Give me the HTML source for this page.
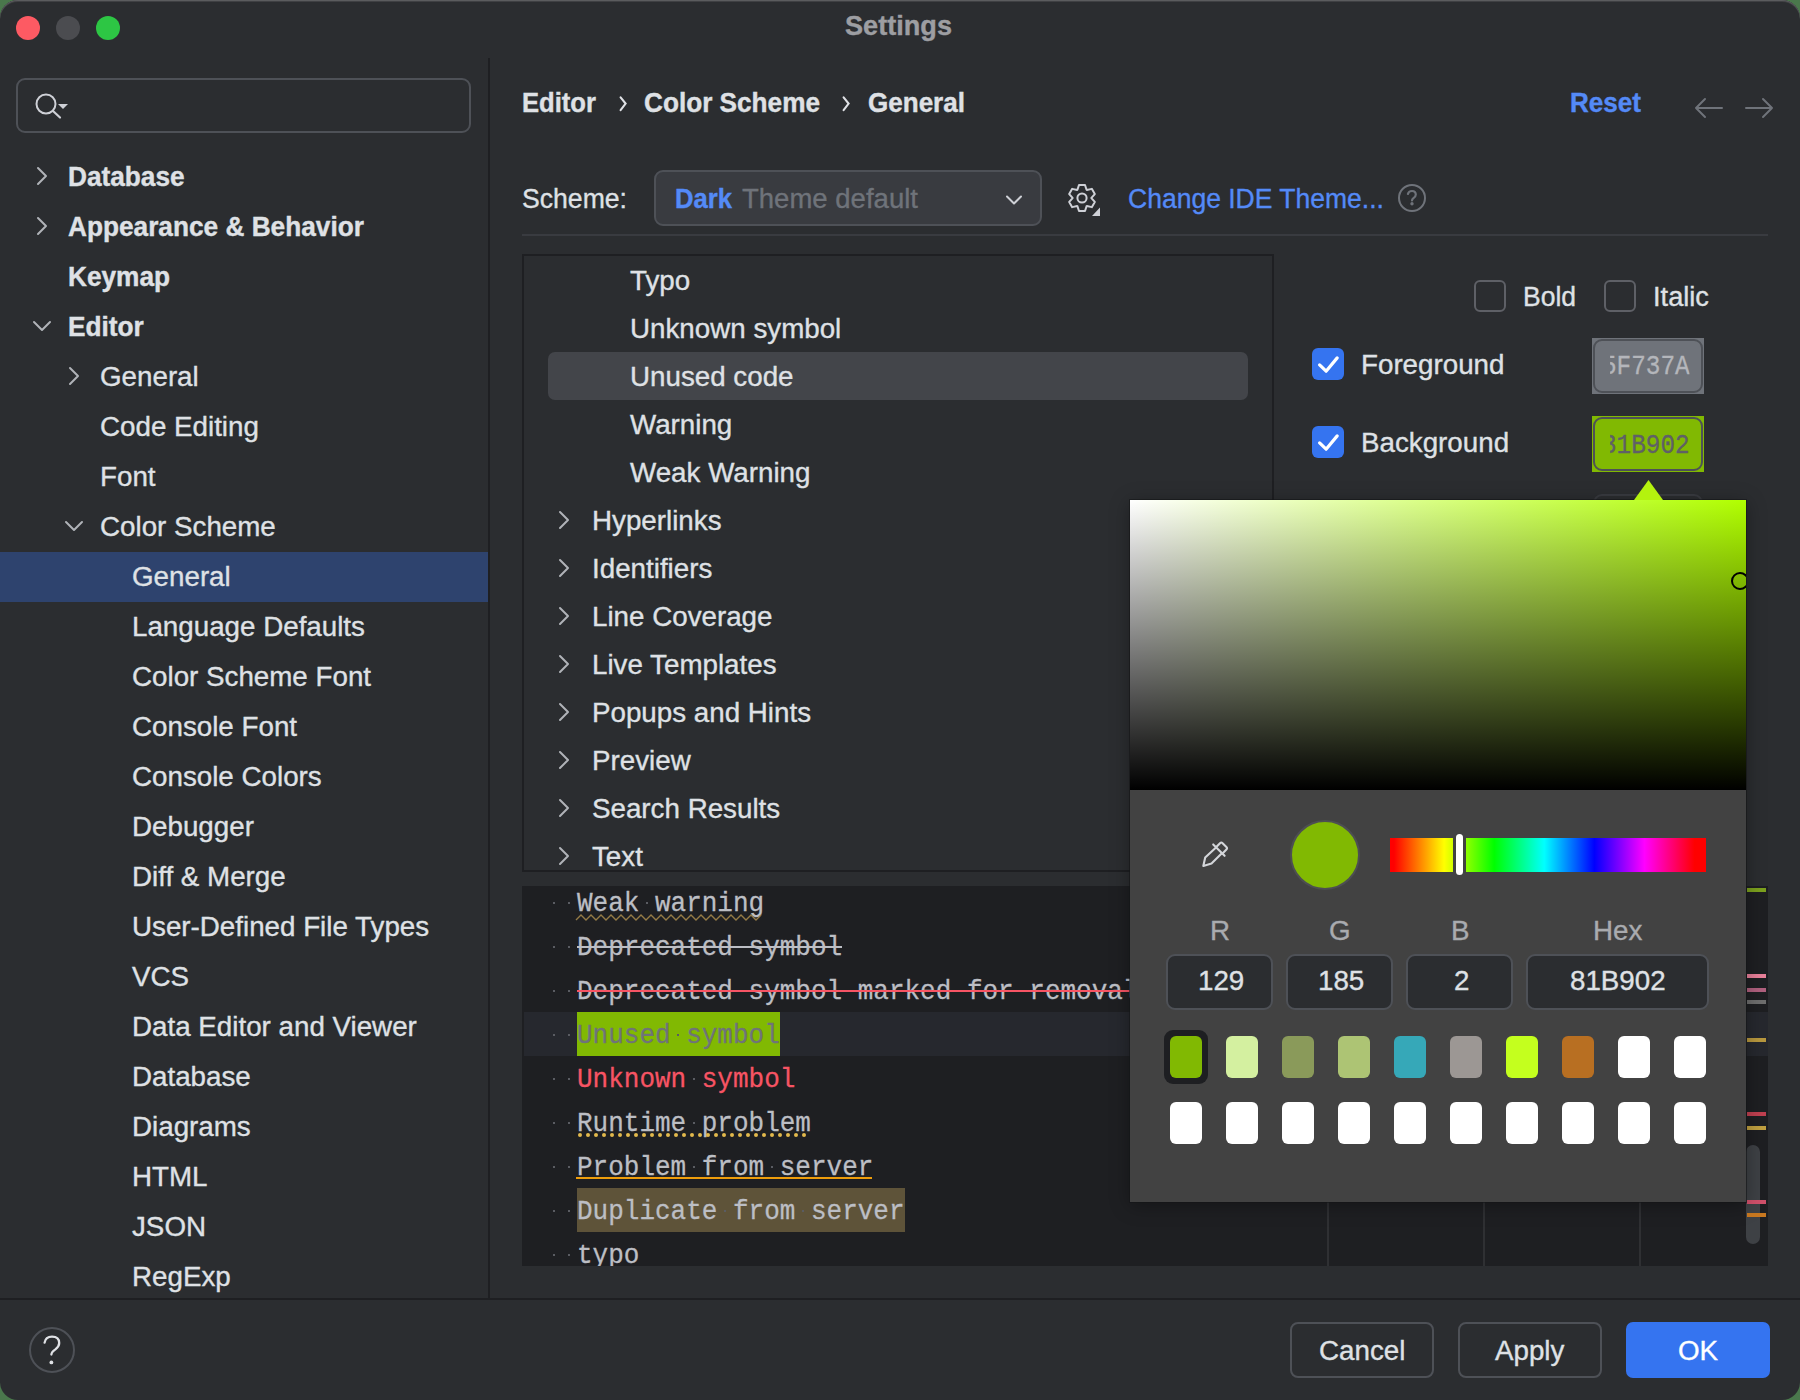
<!DOCTYPE html>
<html><head><meta charset="utf-8"><style>
html,body{margin:0;padding:0;width:1800px;height:1400px;overflow:hidden;background:#4a784c;}
.win{position:absolute;left:0;top:0;width:1800px;height:1400px;background:#2b2d30;border-radius:18px;box-shadow:inset 0 1px 0 #5b5c5e, inset 0 2px 0 #3f4043;}
.a{position:absolute;}
.t{position:absolute;white-space:pre;font-family:"Liberation Sans",sans-serif;transform-origin:0 0;}
.m{font-family:"Liberation Mono",monospace;-webkit-text-stroke:0.3px currentColor;}
svg.a{overflow:visible}
</style></head><body>
<div class="win"></div>
<div style="position:absolute;left:0;top:0;width:1800px;height:1400px;border-radius:18px;overflow:hidden">
<div class="t" style="left:845px;top:12.37px;font-size:27.91px;line-height:27.91px;font-weight:700;-webkit-text-stroke:0.4px currentColor;color:#9d9ea2;transform:scaleX(0.9719);">Settings</div>
<div class="a" style="left:16px;top:16px;width:24px;height:24px;border-radius:50%;background:#fd5a63"></div>
<div class="a" style="left:56px;top:16px;width:24px;height:24px;border-radius:50%;background:#4b4c50"></div>
<div class="a" style="left:96px;top:16px;width:24px;height:24px;border-radius:50%;background:#2dc644"></div>
<div class="a" style="left:16px;top:78px;width:455px;height:55px;border:2px solid #4e5157;border-radius:9px;box-sizing:border-box;"></div>
<svg class="a" style="left:30px;top:88px;" width="44" height="36" viewBox="0 0 44 36"><circle cx="16" cy="16" r="9.5" fill="none" stroke="#ced0d6" stroke-width="2"/><path d="M23 23 L30 29.5" stroke="#ced0d6" stroke-width="2.2" stroke-linecap="round"/><path d="M28 16 L38 16 L33 21 Z" fill="#ced0d6"/></svg>
<div class="a" style="left:0px;top:552px;width:488px;height:50px;background:#2e436e;"></div>
<div class="t" style="left:68px;top:162.62px;font-size:27.62px;line-height:27.62px;font-weight:700;-webkit-text-stroke:0.4px currentColor;color:#dfe1e5;transform:scaleX(0.9500);">Database</div>
<svg class="a" style="left:31.5px;top:164px;" width="20" height="24" viewBox="0 0 20 24"><path d="M6.0 4 L14.0 12 L6.0 20" fill="none" stroke="#b0b3b8" stroke-width="2" stroke-linecap="round" stroke-linejoin="round"/></svg>
<div class="t" style="left:68px;top:212.62px;font-size:27.62px;line-height:27.62px;font-weight:700;-webkit-text-stroke:0.4px currentColor;color:#dfe1e5;transform:scaleX(0.9500);">Appearance &amp; Behavior</div>
<svg class="a" style="left:31.5px;top:214px;" width="20" height="24" viewBox="0 0 20 24"><path d="M6.0 4 L14.0 12 L6.0 20" fill="none" stroke="#b0b3b8" stroke-width="2" stroke-linecap="round" stroke-linejoin="round"/></svg>
<div class="t" style="left:68px;top:262.62px;font-size:27.62px;line-height:27.62px;font-weight:700;-webkit-text-stroke:0.4px currentColor;color:#dfe1e5;transform:scaleX(0.9500);">Keymap</div>
<div class="t" style="left:68px;top:312.62px;font-size:27.62px;line-height:27.62px;font-weight:700;-webkit-text-stroke:0.4px currentColor;color:#dfe1e5;transform:scaleX(0.9500);">Editor</div>
<svg class="a" style="left:30px;top:316px;" width="24" height="20" viewBox="0 0 24 20"><path d="M4 6.0 L12 14.0 L20 6.0" fill="none" stroke="#b0b3b8" stroke-width="2" stroke-linecap="round" stroke-linejoin="round"/></svg>
<div class="t" style="left:100px;top:362.62px;font-size:27.62px;line-height:27.62px;-webkit-text-stroke:0.35px currentColor;color:#dfe1e5;transform:scaleX(1.0050);">General</div>
<svg class="a" style="left:63.5px;top:364px;" width="20" height="24" viewBox="0 0 20 24"><path d="M6.0 4 L14.0 12 L6.0 20" fill="none" stroke="#b0b3b8" stroke-width="2" stroke-linecap="round" stroke-linejoin="round"/></svg>
<div class="t" style="left:100px;top:412.62px;font-size:27.62px;line-height:27.62px;-webkit-text-stroke:0.35px currentColor;color:#dfe1e5;transform:scaleX(1.0050);">Code Editing</div>
<div class="t" style="left:100px;top:462.62px;font-size:27.62px;line-height:27.62px;-webkit-text-stroke:0.35px currentColor;color:#dfe1e5;transform:scaleX(1.0050);">Font</div>
<div class="t" style="left:100px;top:512.62px;font-size:27.62px;line-height:27.62px;-webkit-text-stroke:0.35px currentColor;color:#dfe1e5;transform:scaleX(1.0050);">Color Scheme</div>
<svg class="a" style="left:62px;top:516px;" width="24" height="20" viewBox="0 0 24 20"><path d="M4 6.0 L12 14.0 L20 6.0" fill="none" stroke="#b0b3b8" stroke-width="2" stroke-linecap="round" stroke-linejoin="round"/></svg>
<div class="t" style="left:132px;top:562.62px;font-size:27.62px;line-height:27.62px;-webkit-text-stroke:0.35px currentColor;color:#dfe1e5;transform:scaleX(1.0050);">General</div>
<div class="t" style="left:132px;top:612.62px;font-size:27.62px;line-height:27.62px;-webkit-text-stroke:0.35px currentColor;color:#dfe1e5;transform:scaleX(1.0050);">Language Defaults</div>
<div class="t" style="left:132px;top:662.62px;font-size:27.62px;line-height:27.62px;-webkit-text-stroke:0.35px currentColor;color:#dfe1e5;transform:scaleX(1.0050);">Color Scheme Font</div>
<div class="t" style="left:132px;top:712.62px;font-size:27.62px;line-height:27.62px;-webkit-text-stroke:0.35px currentColor;color:#dfe1e5;transform:scaleX(1.0050);">Console Font</div>
<div class="t" style="left:132px;top:762.62px;font-size:27.62px;line-height:27.62px;-webkit-text-stroke:0.35px currentColor;color:#dfe1e5;transform:scaleX(1.0050);">Console Colors</div>
<div class="t" style="left:132px;top:812.62px;font-size:27.62px;line-height:27.62px;-webkit-text-stroke:0.35px currentColor;color:#dfe1e5;transform:scaleX(1.0050);">Debugger</div>
<div class="t" style="left:132px;top:862.62px;font-size:27.62px;line-height:27.62px;-webkit-text-stroke:0.35px currentColor;color:#dfe1e5;transform:scaleX(1.0050);">Diff &amp; Merge</div>
<div class="t" style="left:132px;top:912.62px;font-size:27.62px;line-height:27.62px;-webkit-text-stroke:0.35px currentColor;color:#dfe1e5;transform:scaleX(1.0050);">User-Defined File Types</div>
<div class="t" style="left:132px;top:962.62px;font-size:27.62px;line-height:27.62px;-webkit-text-stroke:0.35px currentColor;color:#dfe1e5;transform:scaleX(1.0050);">VCS</div>
<div class="t" style="left:132px;top:1012.62px;font-size:27.62px;line-height:27.62px;-webkit-text-stroke:0.35px currentColor;color:#dfe1e5;transform:scaleX(1.0050);">Data Editor and Viewer</div>
<div class="t" style="left:132px;top:1062.62px;font-size:27.62px;line-height:27.62px;-webkit-text-stroke:0.35px currentColor;color:#dfe1e5;transform:scaleX(1.0050);">Database</div>
<div class="t" style="left:132px;top:1112.62px;font-size:27.62px;line-height:27.62px;-webkit-text-stroke:0.35px currentColor;color:#dfe1e5;transform:scaleX(1.0050);">Diagrams</div>
<div class="t" style="left:132px;top:1162.62px;font-size:27.62px;line-height:27.62px;-webkit-text-stroke:0.35px currentColor;color:#dfe1e5;transform:scaleX(1.0050);">HTML</div>
<div class="t" style="left:132px;top:1212.62px;font-size:27.62px;line-height:27.62px;-webkit-text-stroke:0.35px currentColor;color:#dfe1e5;transform:scaleX(1.0050);">JSON</div>
<div class="t" style="left:132px;top:1262.62px;font-size:27.62px;line-height:27.62px;-webkit-text-stroke:0.35px currentColor;color:#dfe1e5;transform:scaleX(1.0050);">RegExp</div>
<div class="a" style="left:488px;top:58px;width:2px;height:1240px;background:#1e1f22;"></div>
<div class="a" style="left:0px;top:1298px;width:1800px;height:2px;background:#1e1f22;"></div>
<div class="t" style="left:522px;top:88.62px;font-size:27.62px;line-height:27.62px;font-weight:700;-webkit-text-stroke:0.4px currentColor;color:#dfe1e5;transform:scaleX(0.9276);">Editor</div>
<svg class="a" style="left:610px;top:90px;" width="24" height="28" viewBox="0 0 24 28"><path d="M10.6 7.4 L15.6 13.6 L10.6 20.1" fill="none" stroke="#dfe1e5" stroke-width="2.1" stroke-linecap="round" stroke-linejoin="miter"/></svg>
<div class="t" style="left:644px;top:88.62px;font-size:27.62px;line-height:27.62px;font-weight:700;-webkit-text-stroke:0.4px currentColor;color:#dfe1e5;transform:scaleX(0.9478);">Color Scheme</div>
<svg class="a" style="left:832.5px;top:90px;" width="24" height="28" viewBox="0 0 24 28"><path d="M10.6 7.4 L15.6 13.6 L10.6 20.1" fill="none" stroke="#dfe1e5" stroke-width="2.1" stroke-linecap="round" stroke-linejoin="miter"/></svg>
<div class="t" style="left:868px;top:88.62px;font-size:27.62px;line-height:27.62px;font-weight:700;-webkit-text-stroke:0.4px currentColor;color:#dfe1e5;transform:scaleX(0.9431);">General</div>
<div class="t" style="left:1570px;top:88.62px;font-size:27.62px;line-height:27.62px;font-weight:700;-webkit-text-stroke:0.4px currentColor;color:#548af7;transform:scaleX(0.9439);">Reset</div>
<svg class="a" style="left:1692px;top:94px;" width="32" height="28" viewBox="0 0 32 28"><path d="M30 14 H4 M13 5 L4 14 L13 23" fill="none" stroke="#6f737a" stroke-width="2" stroke-linecap="round" stroke-linejoin="round"/></svg>
<svg class="a" style="left:1744px;top:94px;" width="32" height="28" viewBox="0 0 32 28"><path d="M2 14 H28 M19 5 L28 14 L19 23" fill="none" stroke="#6f737a" stroke-width="2" stroke-linecap="round" stroke-linejoin="round"/></svg>
<div class="t" style="left:522px;top:184.62px;font-size:27.62px;line-height:27.62px;-webkit-text-stroke:0.35px currentColor;color:#dfe1e5;transform:scaleX(0.9634);">Scheme:</div>
<div class="a" style="left:654px;top:170px;width:388px;height:56px;background:#393b40;border:2px solid #4e5157;border-radius:9px;box-sizing:border-box;"></div>
<div class="t" style="left:675px;top:184.62px;font-size:27.62px;line-height:27.62px;font-weight:700;-webkit-text-stroke:0.4px currentColor;color:#548af7;transform:scaleX(0.9282);">Dark</div>
<div class="t" style="left:742px;top:184.62px;font-size:27.62px;line-height:27.62px;-webkit-text-stroke:0.35px currentColor;color:#6f737a;transform:scaleX(0.9969);">Theme default</div>
<svg class="a" style="left:1002px;top:190px;" width="24" height="20" viewBox="0 0 24 20"><path d="M5 6.5 L12 13.5 L19 6.5" fill="none" stroke="#ced0d6" stroke-width="2" stroke-linecap="round" stroke-linejoin="round"/></svg>
<svg class="a" style="left:1062px;top:180px;" width="44" height="40" viewBox="0 0 44 40"><path d="M15.44 9.78 L16.99 4.94 L23.01 4.94 L24.56 9.78 L24.84 9.94 L29.80 8.86 L32.81 14.08 L29.40 17.84 L29.40 18.16 L32.81 21.92 L29.80 27.14 L24.84 26.06 L24.56 26.22 L23.01 31.06 L16.99 31.06 L15.44 26.22 L15.16 26.06 L10.20 27.14 L7.19 21.92 L10.60 18.16 L10.60 17.84 L7.19 14.08 L10.20 8.86 L15.16 9.94 Z" fill="none" stroke="#ced0d6" stroke-width="2" stroke-linejoin="round"/><circle cx="20" cy="18" r="4.6" fill="none" stroke="#ced0d6" stroke-width="2"/><path d="M38 27.5 L38 36 L30 36 Z" fill="#ced0d6"/></svg>
<div class="t" style="left:1128px;top:184.62px;font-size:27.62px;line-height:27.62px;-webkit-text-stroke:0.35px currentColor;color:#548af7;transform:scaleX(0.9603);">Change IDE Theme...</div>
<div class="a" style="left:1398px;top:184px;width:28px;height:28px;box-sizing:border-box;border:2px solid #6f737a;border-radius:50%"></div>
<svg class="a" style="left:1390px;top:176px;" width="44" height="44" viewBox="0 0 44 44"><path d="M17.9 18 Q18.6 15 22 15 Q25.8 15 25.8 18.6 Q25.8 20.6 23.5 22.2 Q22 23.3 22 24.4" fill="none" stroke="#6f737a" stroke-width="2.2" stroke-linecap="round"/><circle cx="22" cy="27.8" r="1.7" fill="#6f737a"/></svg>
<div class="a" style="left:522px;top:234px;width:1246px;height:2px;background:#393b40;"></div>
<div class="a" style="left:522px;top:254px;width:752px;height:618px;border:2px solid #1e1f22;box-sizing:border-box;"></div>
<div class="a" style="left:548px;top:352px;width:700px;height:48px;background:#43454a;border-radius:7px;"></div>
<div class="t" style="left:630px;top:266.62px;font-size:27.62px;line-height:27.62px;-webkit-text-stroke:0.35px currentColor;color:#dfe1e5;transform:scaleX(1.0050);">Typo</div>
<div class="t" style="left:630px;top:314.62px;font-size:27.62px;line-height:27.62px;-webkit-text-stroke:0.35px currentColor;color:#dfe1e5;transform:scaleX(1.0050);">Unknown symbol</div>
<div class="t" style="left:630px;top:362.62px;font-size:27.62px;line-height:27.62px;-webkit-text-stroke:0.35px currentColor;color:#dfe1e5;transform:scaleX(1.0050);">Unused code</div>
<div class="t" style="left:630px;top:410.62px;font-size:27.62px;line-height:27.62px;-webkit-text-stroke:0.35px currentColor;color:#dfe1e5;transform:scaleX(1.0050);">Warning</div>
<div class="t" style="left:630px;top:458.62px;font-size:27.62px;line-height:27.62px;-webkit-text-stroke:0.35px currentColor;color:#dfe1e5;transform:scaleX(1.0050);">Weak Warning</div>
<div class="t" style="left:592px;top:506.62px;font-size:27.62px;line-height:27.62px;-webkit-text-stroke:0.35px currentColor;color:#dfe1e5;transform:scaleX(1.0050);">Hyperlinks</div>
<svg class="a" style="left:553.5px;top:508px;" width="20" height="24" viewBox="0 0 20 24"><path d="M6.0 4 L14.0 12 L6.0 20" fill="none" stroke="#b0b3b8" stroke-width="2" stroke-linecap="round" stroke-linejoin="round"/></svg>
<div class="t" style="left:592px;top:554.62px;font-size:27.62px;line-height:27.62px;-webkit-text-stroke:0.35px currentColor;color:#dfe1e5;transform:scaleX(1.0050);">Identifiers</div>
<svg class="a" style="left:553.5px;top:556px;" width="20" height="24" viewBox="0 0 20 24"><path d="M6.0 4 L14.0 12 L6.0 20" fill="none" stroke="#b0b3b8" stroke-width="2" stroke-linecap="round" stroke-linejoin="round"/></svg>
<div class="t" style="left:592px;top:602.62px;font-size:27.62px;line-height:27.62px;-webkit-text-stroke:0.35px currentColor;color:#dfe1e5;transform:scaleX(1.0050);">Line Coverage</div>
<svg class="a" style="left:553.5px;top:604px;" width="20" height="24" viewBox="0 0 20 24"><path d="M6.0 4 L14.0 12 L6.0 20" fill="none" stroke="#b0b3b8" stroke-width="2" stroke-linecap="round" stroke-linejoin="round"/></svg>
<div class="t" style="left:592px;top:650.62px;font-size:27.62px;line-height:27.62px;-webkit-text-stroke:0.35px currentColor;color:#dfe1e5;transform:scaleX(1.0050);">Live Templates</div>
<svg class="a" style="left:553.5px;top:652px;" width="20" height="24" viewBox="0 0 20 24"><path d="M6.0 4 L14.0 12 L6.0 20" fill="none" stroke="#b0b3b8" stroke-width="2" stroke-linecap="round" stroke-linejoin="round"/></svg>
<div class="t" style="left:592px;top:698.62px;font-size:27.62px;line-height:27.62px;-webkit-text-stroke:0.35px currentColor;color:#dfe1e5;transform:scaleX(1.0050);">Popups and Hints</div>
<svg class="a" style="left:553.5px;top:700px;" width="20" height="24" viewBox="0 0 20 24"><path d="M6.0 4 L14.0 12 L6.0 20" fill="none" stroke="#b0b3b8" stroke-width="2" stroke-linecap="round" stroke-linejoin="round"/></svg>
<div class="t" style="left:592px;top:746.62px;font-size:27.62px;line-height:27.62px;-webkit-text-stroke:0.35px currentColor;color:#dfe1e5;transform:scaleX(1.0050);">Preview</div>
<svg class="a" style="left:553.5px;top:748px;" width="20" height="24" viewBox="0 0 20 24"><path d="M6.0 4 L14.0 12 L6.0 20" fill="none" stroke="#b0b3b8" stroke-width="2" stroke-linecap="round" stroke-linejoin="round"/></svg>
<div class="t" style="left:592px;top:794.62px;font-size:27.62px;line-height:27.62px;-webkit-text-stroke:0.35px currentColor;color:#dfe1e5;transform:scaleX(1.0050);">Search Results</div>
<svg class="a" style="left:553.5px;top:796px;" width="20" height="24" viewBox="0 0 20 24"><path d="M6.0 4 L14.0 12 L6.0 20" fill="none" stroke="#b0b3b8" stroke-width="2" stroke-linecap="round" stroke-linejoin="round"/></svg>
<div class="t" style="left:592px;top:842.62px;font-size:27.62px;line-height:27.62px;-webkit-text-stroke:0.35px currentColor;color:#dfe1e5;transform:scaleX(1.0050);">Text</div>
<svg class="a" style="left:553.5px;top:844px;" width="20" height="24" viewBox="0 0 20 24"><path d="M6.0 4 L14.0 12 L6.0 20" fill="none" stroke="#b0b3b8" stroke-width="2" stroke-linecap="round" stroke-linejoin="round"/></svg>
<div class="a" style="left:1474px;top:280px;width:32px;height:32px;border:2px solid #5e6066;border-radius:6px;box-sizing:border-box;"></div>
<div class="a" style="left:1604px;top:280px;width:32px;height:32px;border:2px solid #5e6066;border-radius:6px;box-sizing:border-box;"></div>
<div class="t" style="left:1523px;top:282.62px;font-size:27.62px;line-height:27.62px;-webkit-text-stroke:0.35px currentColor;color:#dfe1e5;transform:scaleX(0.9588);">Bold</div>
<div class="t" style="left:1653px;top:282.62px;font-size:27.62px;line-height:27.62px;-webkit-text-stroke:0.35px currentColor;color:#dfe1e5;transform:scaleX(0.9862);">Italic</div>
<div class="a" style="left:1312px;top:348px;width:32px;height:32px;background:#3574f0;border-radius:6px;"></div>
<svg class="a" style="left:1312px;top:348px;" width="32" height="32" viewBox="0 0 32 32"><path d="M7.6 16.9 L14.1 23.2 L25.2 9.9" fill="none" stroke="#fff" stroke-width="3.2" stroke-linecap="round" stroke-linejoin="round"/></svg>
<div class="t" style="left:1361px;top:350.62px;font-size:27.62px;line-height:27.62px;-webkit-text-stroke:0.35px currentColor;color:#dfe1e5;transform:scaleX(1.0050);">Foreground</div>
<div class="a" style="left:1312px;top:426px;width:32px;height:32px;background:#3574f0;border-radius:6px;"></div>
<svg class="a" style="left:1312px;top:426px;" width="32" height="32" viewBox="0 0 32 32"><path d="M7.6 16.9 L14.1 23.2 L25.2 9.9" fill="none" stroke="#fff" stroke-width="3.2" stroke-linecap="round" stroke-linejoin="round"/></svg>
<div class="t" style="left:1361px;top:428.62px;font-size:27.62px;line-height:27.62px;-webkit-text-stroke:0.35px currentColor;color:#dfe1e5;transform:scaleX(1.0050);">Background</div>
<div class="a" style="left:1592px;top:338px;width:112px;height:56px;background:#6f737a;overflow:hidden"><div style="position:absolute;left:1px;top:1px;width:110px;height:54px;box-sizing:border-box;border:2px solid #4e5157;border-radius:9px"></div></div>
<div class="a" style="left:1592px;top:416px;width:112px;height:56px;background:#81b902;overflow:hidden"><div style="position:absolute;left:1px;top:1px;width:110px;height:54px;box-sizing:border-box;border:2px solid #4e5157;border-radius:9px"></div></div>
<div class="t m" style="left:1602px;top:354.32px;font-size:27px;line-height:27px;color:#b4b6bb;transform:scaleX(0.9012);clip-path:inset(0 0 0 9px);">5F737A</div>
<div class="t m" style="left:1602px;top:432.82px;font-size:27px;line-height:27px;color:#5f6066;transform:scaleX(0.9012);clip-path:inset(0 0 0 9px);">31B902</div>
<div class="a" style="left:1593px;top:494px;width:110px;height:20px;border:2px solid #393b40;border-radius:9px;box-sizing:border-box;"></div>
<div class="a" style="left:522px;top:886px;width:1246px;height:380px;background:#1e1f22;overflow:hidden" id="ed">
<div class="a" style="left:2px;top:126px;width:1244px;height:44px;background:#26282e;"></div>
<div class="a" style="left:805px;top:0px;width:2px;height:380px;background:#2f3033;"></div>
<div class="a" style="left:961px;top:0px;width:2px;height:380px;background:#2f3033;"></div>
<div class="a" style="left:1117px;top:0px;width:2px;height:380px;background:#2f3033;"></div>
<div class="a" style="left:31px;top:16px;width:2px;height:2px;background:#5a5c62;"></div>
<div class="a" style="left:46px;top:16px;width:2px;height:2px;background:#5a5c62;"></div>
<div class="a" style="left:124px;top:16px;width:2px;height:2px;background:#5a5c62;"></div>
<div class="t m" style="left:55px;top:4.40px;font-size:28.2px;line-height:28.2px;color:#bcbec4;transform:scaleX(0.9220);">Weak&nbsp;warning</div>
<div class="a" style="left:31px;top:60px;width:2px;height:2px;background:#5a5c62;"></div>
<div class="a" style="left:46px;top:60px;width:2px;height:2px;background:#5a5c62;"></div>
<div class="a" style="left:218px;top:60px;width:2px;height:2px;background:#5a5c62;"></div>
<div class="t m" style="left:55px;top:48.40px;font-size:28.2px;line-height:28.2px;color:#bcbec4;transform:scaleX(0.9220);">Deprecated&nbsp;symbol</div>
<div class="a" style="left:55px;top:60px;width:265px;height:2px;background:#bcbec4;"></div>
<div class="a" style="left:31px;top:104px;width:2px;height:2px;background:#5a5c62;"></div>
<div class="a" style="left:46px;top:104px;width:2px;height:2px;background:#5a5c62;"></div>
<div class="a" style="left:218px;top:104px;width:2px;height:2px;background:#5a5c62;"></div>
<div class="a" style="left:327px;top:104px;width:2px;height:2px;background:#5a5c62;"></div>
<div class="a" style="left:436px;top:104px;width:2px;height:2px;background:#5a5c62;"></div>
<div class="a" style="left:499px;top:104px;width:2px;height:2px;background:#5a5c62;"></div>
<div class="t m" style="left:55px;top:92.40px;font-size:28.2px;line-height:28.2px;color:#bcbec4;transform:scaleX(0.9220);">Deprecated&nbsp;symbol&nbsp;marked&nbsp;for&nbsp;removal</div>
<div class="a" style="left:55px;top:104px;width:562px;height:2px;background:#f75464;"></div>
<div class="a" style="left:31px;top:148px;width:2px;height:2px;background:#5a5c62;"></div>
<div class="a" style="left:46px;top:148px;width:2px;height:2px;background:#5a5c62;"></div>
<div class="a" style="left:55px;top:126px;width:203px;height:44px;background:#81b902;"></div>
<div class="a" style="left:155px;top:148px;width:2px;height:2px;background:#5a5c62;"></div>
<div class="t m" style="left:55px;top:136.40px;font-size:28.2px;line-height:28.2px;color:#6f737a;transform:scaleX(0.9220);">Unused&nbsp;symbol</div>
<div class="a" style="left:31px;top:192px;width:2px;height:2px;background:#5a5c62;"></div>
<div class="a" style="left:46px;top:192px;width:2px;height:2px;background:#5a5c62;"></div>
<div class="a" style="left:171px;top:192px;width:2px;height:2px;background:#5a5c62;"></div>
<div class="t m" style="left:55px;top:180.40px;font-size:28.2px;line-height:28.2px;color:#f75464;transform:scaleX(0.9220);">Unknown&nbsp;symbol</div>
<div class="a" style="left:31px;top:236px;width:2px;height:2px;background:#5a5c62;"></div>
<div class="a" style="left:46px;top:236px;width:2px;height:2px;background:#5a5c62;"></div>
<div class="a" style="left:171px;top:236px;width:2px;height:2px;background:#5a5c62;"></div>
<div class="t m" style="left:55px;top:224.40px;font-size:28.2px;line-height:28.2px;color:#bcbec4;transform:scaleX(0.9220);">Runtime&nbsp;problem</div>
<div class="a" style="left:56px;top:247px;width:4px;height:4px;background:#e2b94c;border-radius:50%;"></div>
<div class="a" style="left:64px;top:247px;width:4px;height:4px;background:#e2b94c;border-radius:50%;"></div>
<div class="a" style="left:72px;top:247px;width:4px;height:4px;background:#e2b94c;border-radius:50%;"></div>
<div class="a" style="left:80px;top:247px;width:4px;height:4px;background:#e2b94c;border-radius:50%;"></div>
<div class="a" style="left:88px;top:247px;width:4px;height:4px;background:#e2b94c;border-radius:50%;"></div>
<div class="a" style="left:96px;top:247px;width:4px;height:4px;background:#e2b94c;border-radius:50%;"></div>
<div class="a" style="left:104px;top:247px;width:4px;height:4px;background:#e2b94c;border-radius:50%;"></div>
<div class="a" style="left:112px;top:247px;width:4px;height:4px;background:#e2b94c;border-radius:50%;"></div>
<div class="a" style="left:120px;top:247px;width:4px;height:4px;background:#e2b94c;border-radius:50%;"></div>
<div class="a" style="left:128px;top:247px;width:4px;height:4px;background:#e2b94c;border-radius:50%;"></div>
<div class="a" style="left:136px;top:247px;width:4px;height:4px;background:#e2b94c;border-radius:50%;"></div>
<div class="a" style="left:144px;top:247px;width:4px;height:4px;background:#e2b94c;border-radius:50%;"></div>
<div class="a" style="left:152px;top:247px;width:4px;height:4px;background:#e2b94c;border-radius:50%;"></div>
<div class="a" style="left:160px;top:247px;width:4px;height:4px;background:#e2b94c;border-radius:50%;"></div>
<div class="a" style="left:168px;top:247px;width:4px;height:4px;background:#e2b94c;border-radius:50%;"></div>
<div class="a" style="left:176px;top:247px;width:4px;height:4px;background:#e2b94c;border-radius:50%;"></div>
<div class="a" style="left:184px;top:247px;width:4px;height:4px;background:#e2b94c;border-radius:50%;"></div>
<div class="a" style="left:192px;top:247px;width:4px;height:4px;background:#e2b94c;border-radius:50%;"></div>
<div class="a" style="left:200px;top:247px;width:4px;height:4px;background:#e2b94c;border-radius:50%;"></div>
<div class="a" style="left:208px;top:247px;width:4px;height:4px;background:#e2b94c;border-radius:50%;"></div>
<div class="a" style="left:216px;top:247px;width:4px;height:4px;background:#e2b94c;border-radius:50%;"></div>
<div class="a" style="left:224px;top:247px;width:4px;height:4px;background:#e2b94c;border-radius:50%;"></div>
<div class="a" style="left:232px;top:247px;width:4px;height:4px;background:#e2b94c;border-radius:50%;"></div>
<div class="a" style="left:240px;top:247px;width:4px;height:4px;background:#e2b94c;border-radius:50%;"></div>
<div class="a" style="left:248px;top:247px;width:4px;height:4px;background:#e2b94c;border-radius:50%;"></div>
<div class="a" style="left:256px;top:247px;width:4px;height:4px;background:#e2b94c;border-radius:50%;"></div>
<div class="a" style="left:264px;top:247px;width:4px;height:4px;background:#e2b94c;border-radius:50%;"></div>
<div class="a" style="left:272px;top:247px;width:4px;height:4px;background:#e2b94c;border-radius:50%;"></div>
<div class="a" style="left:280px;top:247px;width:4px;height:4px;background:#e2b94c;border-radius:50%;"></div>
<div class="a" style="left:31px;top:280px;width:2px;height:2px;background:#5a5c62;"></div>
<div class="a" style="left:46px;top:280px;width:2px;height:2px;background:#5a5c62;"></div>
<div class="a" style="left:171px;top:280px;width:2px;height:2px;background:#5a5c62;"></div>
<div class="a" style="left:249px;top:280px;width:2px;height:2px;background:#5a5c62;"></div>
<div class="t m" style="left:55px;top:268.40px;font-size:28.2px;line-height:28.2px;color:#bcbec4;transform:scaleX(0.9220);">Problem&nbsp;from&nbsp;server</div>
<div class="a" style="left:54px;top:291px;width:296px;height:2px;background:#ee9d0c;"></div>
<div class="a" style="left:31px;top:324px;width:2px;height:2px;background:#5a5c62;"></div>
<div class="a" style="left:46px;top:324px;width:2px;height:2px;background:#5a5c62;"></div>
<div class="a" style="left:55px;top:302px;width:328px;height:44px;background:#5e5339;"></div>
<div class="a" style="left:202px;top:324px;width:2px;height:2px;background:#5a5c62;"></div>
<div class="a" style="left:280px;top:324px;width:2px;height:2px;background:#5a5c62;"></div>
<div class="t m" style="left:55px;top:312.40px;font-size:28.2px;line-height:28.2px;color:#bcbec4;transform:scaleX(0.9220);">Duplicate&nbsp;from&nbsp;server</div>
<div class="a" style="left:31px;top:368px;width:2px;height:2px;background:#5a5c62;"></div>
<div class="a" style="left:46px;top:368px;width:2px;height:2px;background:#5a5c62;"></div>
<div class="t m" style="left:55px;top:356.40px;font-size:28.2px;line-height:28.2px;color:#bcbec4;transform:scaleX(0.9220);">typo</div>
<svg class="a" style="left:54px;top:29px;" width="190" height="6" viewBox="0 0 190 6"><polyline points="0,5 5,0 10,5 15,0 20,5 25,0 30,5 35,0 40,5 45,0 50,5 55,0 60,5 65,0 70,5 75,0 80,5 85,0 90,5 95,0 100,5 105,0 110,5 115,0 120,5 125,0 130,5 135,0 140,5 145,0 150,5 155,0 160,5 165,0 170,5 175,0 180,5 185,0" fill="none" stroke="#957b46" stroke-width="1.35"/></svg>
<div class="a" style="left:1224px;top:259px;width:14px;height:99px;background:rgba(90,93,99,0.55);border-radius:7px;"></div>
<div class="a" style="left:1225px;top:2px;width:19px;height:4px;background:#7ca11e;"></div>
<div class="a" style="left:1225px;top:88px;width:19px;height:4px;background:#e8809a;"></div>
<div class="a" style="left:1225px;top:102px;width:19px;height:4px;background:#b0607e;"></div>
<div class="a" style="left:1225px;top:114px;width:19px;height:4px;background:#6e6e6e;"></div>
<div class="a" style="left:1225px;top:152px;width:19px;height:4px;background:#b8983e;"></div>
<div class="a" style="left:1225px;top:226px;width:19px;height:4px;background:#c04050;"></div>
<div class="a" style="left:1225px;top:240px;width:19px;height:4px;background:#c0a040;"></div>
<div class="a" style="left:1225px;top:314px;width:19px;height:4px;background:#d0506a;"></div>
<div class="a" style="left:1225px;top:327px;width:19px;height:4px;background:#c87820;"></div>
</div>
<div class="a" style="left:1130px;top:500px;width:616px;height:702px;background:#424242;box-shadow:0 0 0 1px rgba(20,21,23,0.6), 0 3px 18px rgba(0,0,0,0.35);"></div>
<div class="a" style="left:1130px;top:500px;width:616px;height:290px;background:linear-gradient(to bottom, rgba(0,0,0,0), #000), linear-gradient(to right, #fff, #b1ff00)"></div>
<svg class="a" style="left:1634px;top:480px;" width="29" height="21" viewBox="0 0 29 21"><path d="M0 20 L14.5 0 L29 20 Z" fill="#b4f20e"/></svg>
<div class="a" style="left:1130px;top:500px;width:616px;height:290px;overflow:hidden"><div class="a" style="left:601px;top:72px;width:18px;height:18px;box-sizing:border-box;border:2px solid #000;border-radius:50%"></div></div>
<svg class="a" style="left:1195px;top:835px;" width="40" height="40" viewBox="0 0 40 40"><g fill="none" stroke="#d4d6da" stroke-width="2.1" stroke-linejoin="round" stroke-linecap="round"><path d="M21 12.3 L25 8.2 Q26.3 6.9 27.6 8.2 L31.4 12 Q32.7 13.3 31.4 14.6 L27.3 18.7"/><path d="M18.2 9.4 L29.6 20.8"/><path d="M20.5 12.9 L10.2 22.6 L8.3 30.9 L16.5 28.4 L26.6 18.6"/></g></svg>
<div class="a" style="left:1290px;top:820px;width:70px;height:70px;border-radius:50%;background:#81b902;box-sizing:border-box;border:2px solid #4d4f52"></div>
<div class="a" style="left:1390px;top:838px;width:316px;height:34px;background:linear-gradient(to right,#f00 1.27%,#ff0 17.12%,#0f0 32.98%,#0ff 48.83%,#00f 64.68%,#f0f 80.53%,#f00 96.4%)"></div>
<div class="a" style="left:1453px;top:834px;width:13px;height:41px;background:#424242;"></div>
<div class="a" style="left:1456px;top:834px;width:7px;height:41px;background:#ffffff;border-radius:4px;"></div>
<div class="t" style="left:1209.9839815625px;top:916.62px;font-size:27.62px;line-height:27.62px;-webkit-text-stroke:0.35px currentColor;color:#a9abaf;transform:scaleX(1.0050);">R</div>
<div class="t" style="left:1329.2125184375px;top:916.62px;font-size:27.62px;line-height:27.62px;-webkit-text-stroke:0.35px currentColor;color:#a9abaf;transform:scaleX(1.0050);">G</div>
<div class="t" style="left:1450.74894359375px;top:916.62px;font-size:27.62px;line-height:27.62px;-webkit-text-stroke:0.35px currentColor;color:#a9abaf;transform:scaleX(1.0050);">B</div>
<div class="t" style="left:1593.335933828125px;top:916.62px;font-size:27.62px;line-height:27.62px;-webkit-text-stroke:0.35px currentColor;color:#a9abaf;transform:scaleX(1.0050);">Hex</div>
<div class="a" style="left:1166px;top:954px;width:107px;height:56px;background:#2b2d30;border:2px solid #4e5157;border-radius:9px;box-sizing:border-box;"></div>
<div class="t" style="left:1198.359356796875px;top:966.62px;font-size:27.62px;line-height:27.62px;-webkit-text-stroke:0.35px currentColor;color:#dfe1e5;transform:scaleX(1.0050);">129</div>
<div class="a" style="left:1286px;top:954px;width:107px;height:56px;background:#2b2d30;border:2px solid #4e5157;border-radius:9px;box-sizing:border-box;"></div>
<div class="t" style="left:1318.359356796875px;top:966.62px;font-size:27.62px;line-height:27.62px;-webkit-text-stroke:0.35px currentColor;color:#dfe1e5;transform:scaleX(1.0050);">185</div>
<div class="a" style="left:1406px;top:954px;width:107px;height:56px;background:#2b2d30;border:2px solid #4e5157;border-radius:9px;box-sizing:border-box;"></div>
<div class="t" style="left:1453.786452265625px;top:966.62px;font-size:27.62px;line-height:27.62px;-webkit-text-stroke:0.35px currentColor;color:#dfe1e5;transform:scaleX(1.0050);">2</div>
<div class="a" style="left:1526px;top:954px;width:183px;height:56px;background:#2b2d30;border:2px solid #4e5157;border-radius:9px;box-sizing:border-box;"></div>
<div class="t" style="left:1569.681204921875px;top:966.62px;font-size:27.62px;line-height:27.62px;-webkit-text-stroke:0.35px currentColor;color:#dfe1e5;transform:scaleX(1.0050);">81B902</div>
<div class="a" style="left:1164px;top:1030px;width:44px;height:54px;background:#1e1f22;border-radius:9px;"></div>
<div class="a" style="left:1170px;top:1036px;width:32px;height:42px;background:#81b902;border-radius:6px;"></div>
<div class="a" style="left:1170px;top:1102px;width:32px;height:42px;background:#ffffff;border-radius:6px;"></div>
<div class="a" style="left:1226px;top:1036px;width:32px;height:42px;background:#d4f0a0;border-radius:6px;"></div>
<div class="a" style="left:1226px;top:1102px;width:32px;height:42px;background:#ffffff;border-radius:6px;"></div>
<div class="a" style="left:1282px;top:1036px;width:32px;height:42px;background:#8a9a5a;border-radius:6px;"></div>
<div class="a" style="left:1282px;top:1102px;width:32px;height:42px;background:#ffffff;border-radius:6px;"></div>
<div class="a" style="left:1338px;top:1036px;width:32px;height:42px;background:#adc474;border-radius:6px;"></div>
<div class="a" style="left:1338px;top:1102px;width:32px;height:42px;background:#ffffff;border-radius:6px;"></div>
<div class="a" style="left:1394px;top:1036px;width:32px;height:42px;background:#36a8b8;border-radius:6px;"></div>
<div class="a" style="left:1394px;top:1102px;width:32px;height:42px;background:#ffffff;border-radius:6px;"></div>
<div class="a" style="left:1450px;top:1036px;width:32px;height:42px;background:#9c9794;border-radius:6px;"></div>
<div class="a" style="left:1450px;top:1102px;width:32px;height:42px;background:#ffffff;border-radius:6px;"></div>
<div class="a" style="left:1506px;top:1036px;width:32px;height:42px;background:#c4ff1e;border-radius:6px;"></div>
<div class="a" style="left:1506px;top:1102px;width:32px;height:42px;background:#ffffff;border-radius:6px;"></div>
<div class="a" style="left:1562px;top:1036px;width:32px;height:42px;background:#b86f22;border-radius:6px;"></div>
<div class="a" style="left:1562px;top:1102px;width:32px;height:42px;background:#ffffff;border-radius:6px;"></div>
<div class="a" style="left:1618px;top:1036px;width:32px;height:42px;background:#ffffff;border-radius:6px;"></div>
<div class="a" style="left:1618px;top:1102px;width:32px;height:42px;background:#ffffff;border-radius:6px;"></div>
<div class="a" style="left:1674px;top:1036px;width:32px;height:42px;background:#ffffff;border-radius:6px;"></div>
<div class="a" style="left:1674px;top:1102px;width:32px;height:42px;background:#ffffff;border-radius:6px;"></div>
<div class="a" style="left:29px;top:1327px;width:46px;height:46px;box-sizing:border-box;border:2px solid #4e5157;border-radius:50%"></div>
<svg class="a" style="left:29px;top:1327px;" width="46" height="46" viewBox="0 0 46 46"><path d="M15.6 15.6 Q16.6 9.6 23 9.6 Q30.2 9.6 30.2 16 Q30.2 19.4 26.4 22.4 Q22.4 25.2 22.4 27.6" fill="none" stroke="#dfe1e5" stroke-width="2.3" stroke-linecap="round"/><circle cx="22.4" cy="35.4" r="1.9" fill="#dfe1e5"/></svg>
<div class="a" style="left:1290px;top:1322px;width:144px;height:56px;border:2px solid #4e5157;border-radius:8px;box-sizing:border-box;"></div>
<div class="t" style="left:1318.827319921875px;top:1336.62px;font-size:27.62px;line-height:27.62px;-webkit-text-stroke:0.35px currentColor;color:#dfe1e5;transform:scaleX(1.0050);">Cancel</div>
<div class="a" style="left:1458px;top:1322px;width:144px;height:56px;border:2px solid #4e5157;border-radius:8px;box-sizing:border-box;"></div>
<div class="t" style="left:1495.3058296875px;top:1336.62px;font-size:27.62px;line-height:27.62px;-webkit-text-stroke:0.35px currentColor;color:#dfe1e5;transform:scaleX(1.0050);">Apply</div>
<div class="a" style="left:1626px;top:1322px;width:144px;height:56px;background:#3574f0;border-radius:7px;"></div>
<div class="t" style="left:1677.96146203125px;top:1336.62px;font-size:27.62px;line-height:27.62px;-webkit-text-stroke:0.35px currentColor;color:#ffffff;transform:scaleX(1.0050);">OK</div>
</div>
</body></html>
